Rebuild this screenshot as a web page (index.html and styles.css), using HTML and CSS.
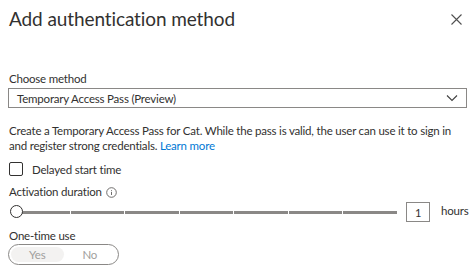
FILE: index.html
```html
<!DOCTYPE html>
<html>
<head>
<meta charset="utf-8">
<link rel="stylesheet" href="styles.css">
</head>
<body>
<div class="panel">
  <div class="header">
    <h1 class="title">Add authentication method</h1>
    <svg class="close" width="11" height="11" viewBox="0 0 11 11"><path d="M0.5 0.5L10.5 10.5M10.5 0.5L0.5 10.5" stroke="#505050" stroke-width="1.1" fill="none"/></svg>
  </div>
  <div class="label first">Choose method</div>
  <div class="select">
    <span>Temporary Access Pass (Preview)</span>
    <svg width="12" height="8" viewBox="0 0 12 8"><path d="M1 1.5L6 6.5L11 1.5" stroke="#404040" stroke-width="1.1" fill="none"/></svg>
  </div>
  <p class="desc">Create a Temporary Access Pass for Cat. While the pass is valid, the user can use it to sign in and register strong credentials. <a class="link">Learn more</a></p>
  <div class="check-row">
    <span class="checkbox"></span>
    <span>Delayed start time</span>
  </div>
  <div class="label duration">Activation duration <svg class="info" width="11" height="11" viewBox="0 0 11 11"><circle cx="5.5" cy="5.5" r="4.8" stroke="#605e5c" stroke-width="0.9" fill="none"/><path d="M5.5 4.8V8M5.5 3V3.8" stroke="#605e5c" stroke-width="0.9"/></svg></div>
  <div class="slider-row">
    <div class="slider">
      <div class="track">
        <span class="seg"></span><span class="seg"></span><span class="seg"></span><span class="seg"></span><span class="seg"></span><span class="seg"></span><span class="seg"></span>
      </div>
      <span class="thumb"></span>
    </div>
    <div class="num">1</div>
    <span class="unit">hours</span>
  </div>
  <div class="label onetime">One-time use</div>
  <div class="toggle">
    <span class="opt on">Yes</span>
    <span class="opt">No</span>
  </div>
</div>
</body>
</html>
```
FILE: styles.css
```css
html, body {
  margin: 0;
  padding: 0;
  background: #ffffff;
}
body {
  font-family: Lato, "Open Sans", sans-serif;
  color: #323130;
  font-size: 11.5px;
  letter-spacing: -0.2px;
}
.panel {
  width: 474px;
  height: 274px;
  padding: 0 7px 0 8px;
  box-sizing: border-box;
  overflow: hidden;
}
.header {
  display: flex;
  justify-content: space-between;
  align-items: center;
  padding-top: 4px;
  height: 30px;
}
.title {
  margin: 0 0 0 1px;
  font-size: 19px;
  font-weight: 400;
  line-height: 28px;
  letter-spacing: -0.1px;
  color: #323130;
}
.close {
  margin-right: 5px;
  margin-top: 1px;
}
.label {
  display: flex;
  align-items: center;
  gap: 4px;
  margin: 5px 0 0 1px;
  line-height: 16px;
}
.label.first {
  margin-top: 37px;
}
.label.duration {
  margin-top: 7px;
}
.label.onetime {
  margin-top: 6px;
}
.info {
  margin-top: 1px;
}
.select {
  margin-top: 1px;
  height: 20px;
  border: 1px solid #8a8886;
  box-sizing: border-box;
  display: flex;
  align-items: center;
  justify-content: space-between;
  padding: 0 8px 0 8px;
}
.desc {
  margin: 15px 0 0 1px;
  line-height: 15px;
}
.link {
  color: #0078d4;
}
.check-row {
  margin: 8px 0 0 1px;
  display: flex;
  align-items: center;
  gap: 9px;
  height: 16px;
}
.checkbox {
  width: 12px;
  height: 12px;
  border: 1px solid #323130;
  border-radius: 2px;
}
.slider-row {
  margin-top: 2px;
  display: flex;
  align-items: center;
  height: 20px;
}
.slider {
  position: relative;
  flex: none;
  width: 388px;
  margin-left: 1px;
  height: 14px;
  display: flex;
  align-items: center;
}
.track {
  margin-left: 7px;
  flex: 1;
  display: flex;
  gap: 1px;
  height: 3px;
}
.seg {
  flex: 1;
  background: #8a8886;
}
.thumb {
  position: absolute;
  left: 1px;
  top: 0;
  width: 11px;
  height: 11px;
  border: 1.5px solid #323130;
  border-radius: 50%;
  background: #fff;
}
.num {
  flex: none;
  margin-left: 9px;
  width: 24px;
  height: 20px;
  border: 1px solid #8a8886;
  box-sizing: border-box;
  display: flex;
  align-items: center;
  justify-content: center;
  font-size: 11px;
}
.unit {
  margin-left: 11px;
  margin-top: -4px;
}
.toggle {
  margin: 0;
  width: 111px;
  height: 21px;
  border: 1px solid #8a8886;
  border-radius: 11px;
  box-sizing: border-box;
  display: flex;
  padding: 2px;
}
.opt {
  flex: 1;
  display: flex;
  align-items: center;
  justify-content: center;
  color: #a19f9d;
  border-radius: 9px;
}
.opt.on {
  background: #f3f2f1;
}
```
